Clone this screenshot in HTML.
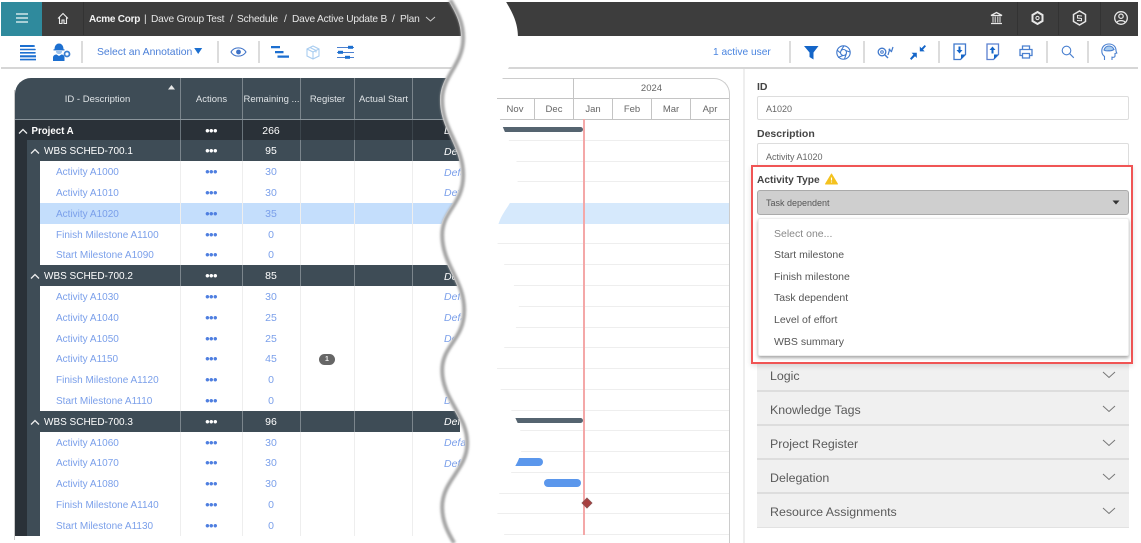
<!DOCTYPE html>
<html><head><meta charset="utf-8">
<style>
html,body{margin:0;padding:0;width:1141px;height:543px;overflow:hidden;background:#fff}
body{position:relative;font-family:"Liberation Sans",sans-serif;color:#555}
.a{position:absolute;white-space:nowrap}
.div{position:absolute;width:2px;top:41px;height:22px;background:#dcdcdc}
.hd{position:absolute;width:1px;top:2px;height:33px;background:#333}
.bc{position:absolute;top:13px;font-size:10.2px;line-height:13px;color:#e6e6e6;letter-spacing:-.2px;white-space:nowrap}
svg{position:absolute;overflow:visible}
#rows{position:absolute;left:15px;top:119.6px;width:445px}
.r{height:20.8px;position:relative;font-size:10px;line-height:20.8px;color:#7a9fea;
background:
linear-gradient(#eee,#eee) 165px 0/1px 100% no-repeat,
linear-gradient(#eee,#eee) 227px 0/1px 100% no-repeat,
linear-gradient(#eee,#eee) 285px 0/1px 100% no-repeat,
linear-gradient(#eee,#eee) 339px 0/1px 100% no-repeat,
linear-gradient(#eee,#eee) 397px 0/1px 100% no-repeat,
linear-gradient(#2a3138,#2a3138) 0 0/12px 100% no-repeat,
linear-gradient(#3e4c56,#3e4c56) 12px 0/13px 100% no-repeat}
.r span{position:absolute;top:2px;white-space:nowrap}
.r .n{left:41px}
.r .t{left:165px;width:62px;text-align:center;font-size:13px;letter-spacing:-.6px;color:#4f7fe0;top:1px}
.r .v{left:227px;width:58px;text-align:center;font-size:10.5px;top:1px}
.r .d{left:429px;font-style:italic;font-size:10.5px;top:1.5px}
.w{color:#fff;
background:
linear-gradient(#7b858c,#7b858c) 165px 0/1px 100% no-repeat,
linear-gradient(#7b858c,#7b858c) 227px 0/1px 100% no-repeat,
linear-gradient(#7b858c,#7b858c) 285px 0/1px 100% no-repeat,
linear-gradient(#7b858c,#7b858c) 339px 0/1px 100% no-repeat,
linear-gradient(#7b858c,#7b858c) 397px 0/1px 100% no-repeat,
linear-gradient(#2a3138,#2a3138) 0 0/12px 100% no-repeat,
linear-gradient(#3e4c56,#3e4c56) 12px 0/100% 100% no-repeat}
.w .n{left:29px;color:#fff}
.w .t{color:#fff}
.p{color:#fff;background:
linear-gradient(#6a747b,#6a747b) 165px 0/1px 100% no-repeat,
linear-gradient(#6a747b,#6a747b) 227px 0/1px 100% no-repeat,
linear-gradient(#3d464d,#3d464d) 285px 0/1px 100% no-repeat,
linear-gradient(#3d464d,#3d464d) 339px 0/1px 100% no-repeat,
linear-gradient(#3d464d,#3d464d) 397px 0/1px 100% no-repeat,
linear-gradient(#2a3138,#2a3138)}
.p .n{left:16.5px;font-weight:bold;font-size:9.7px}
.p .t{color:#fff}
.w .c,.p .c{position:absolute;top:7px;width:6px;height:6px}
.sel{background:
linear-gradient(#eee,#eee) 165px 0/1px 100% no-repeat,
linear-gradient(#eee,#eee) 227px 0/1px 100% no-repeat,
linear-gradient(#eee,#eee) 285px 0/1px 100% no-repeat,
linear-gradient(#eee,#eee) 339px 0/1px 100% no-repeat,
linear-gradient(#eee,#eee) 397px 0/1px 100% no-repeat,
linear-gradient(#2a3138,#2a3138) 0 0/12px 100% no-repeat,
linear-gradient(#3e4c56,#3e4c56) 12px 0/13px 100% no-repeat,
linear-gradient(#c4defc,#c4defc) 25px 0/100% 100% no-repeat}
.th{position:absolute;top:78px;height:41px;line-height:44px;text-align:center;color:#dfe3e6;font-size:9.5px;border-left:1px solid #7b858c;box-sizing:border-box;white-space:nowrap;overflow:hidden}
.gl{position:absolute;left:466px;width:263px;height:1px;background:#eee}
.mo{position:absolute;top:99px;height:20px;line-height:22px;text-align:center;font-size:9.5px;color:#666;border-left:1px solid #c4c4c4;box-sizing:border-box}
.lab{position:absolute;left:757px;font-size:10.5px;font-weight:bold;color:#444;white-space:nowrap}
.inp{position:absolute;left:757px;width:372px;box-sizing:border-box;border:1px solid #ddd;border-radius:2px;background:#fff;font-size:9px;color:#666;padding-left:8px;white-space:nowrap}
.it{position:absolute;left:774px;font-size:10.5px;line-height:14px;color:#555;white-space:nowrap}
.ac{position:absolute;left:757px;width:372px;height:34px;box-sizing:border-box;background:#f0f0f0;border-bottom:2px solid #ddd;font-size:12.4px;line-height:37px;padding-left:13px;color:#5a5a5a;white-space:nowrap}
</style></head>
<body>

<!-- header bar -->
<div class="a" style="left:1px;top:2px;width:1137px;height:33.5px;background:#3d3d3d"></div>
<div class="a" style="left:1px;top:2px;width:41px;height:33.5px;background:#2f8a9d"></div>
<svg style="left:0;top:0" width="80" height="36" fill="none">
<path d="M16 14h12M16 18h12M16 22h12" stroke="#cfe6ea" stroke-width="1.4"/>
<path d="M58 18.5l5-5 5 5M59.5 17.5v6h2.5v-3.5h2v3.500h2.500v-6" stroke="#eee" stroke-width="1.100"/>
</svg>
<div class="hd" style="left:83px"></div>
<div class="bc" style="left:89px;font-weight:bold;color:#f2f2f2;font-size:10px;letter-spacing:-.25px">Acme Corp</div>
<div class="bc" style="left:144px">|</div>
<div class="bc" style="left:151px">Dave Group Test</div>
<div class="bc" style="left:230px">/</div>
<div class="bc" style="left:237px">Schedule</div>
<div class="bc" style="left:284px">/</div>
<div class="bc" style="left:292px">Dave Active Update B</div>
<div class="bc" style="left:392px">/</div>
<div class="bc" style="left:400px">Plan</div>
<svg style="left:424px;top:15px" width="14" height="8" fill="none"><path d="M2 2l4.500 4L11 2" stroke="#ccc" stroke-width="1"/></svg>

<div class="hd" style="left:1017px"></div><div class="hd" style="left:1058px"></div><div class="hd" style="left:1100px"></div>
<svg style="left:990px;top:11px" width="14" height="14" fill="none" stroke="#e8e8e8">
<path d="M1 4.500L6.500 1.500 12 4.500zM1 12.500h11" stroke-width="1.300"/><path d="M3 5.500v6M5.200 5.500v6M7.800 5.500v6M10 5.500v6" stroke-width="1"/></svg>
<svg style="left:1031px;top:11px" width="14" height="14" fill="none" stroke="#e8e8e8">
<path d="M6.500 1l5 3v6l-5 3-5-3V4z" stroke-width="2"/><circle cx="6.500" cy="7" r="1.600" stroke-width="1"/></svg>
<svg style="left:1072px;top:10px" width="15" height="16" fill="none" stroke="#e8e8e8">
<path d="M7.500 1l6 3.500v7l-6 3.500-6-3.500v-7z" stroke-width="1.500"/><path d="M10 6L5.500 5.500v2.500l4 .5v2.200L5 10.500" stroke-width="1"/></svg>
<svg style="left:1113px;top:10px" width="16" height="16" fill="none" stroke="#e8e8e8">
<circle cx="8" cy="8" r="6.300" stroke-width="1.300"/><circle cx="8" cy="6.200" r="2.200" stroke-width="1.200"/><path d="M3.800 12.500c1-2.500 7.400-2.500 8.400 0" stroke-width="1.200"/></svg>

<!-- toolbar -->
<div class="a" style="left:1px;top:67px;width:1137px;height:2px;background:#d6d6d6"></div>
<div class="div" style="left:81px"></div><div class="div" style="left:217px"></div><div class="div" style="left:258px"></div>
<div class="div" style="left:789px"></div><div class="div" style="left:863px"></div><div class="div" style="left:938px"></div><div class="div" style="left:1046px"></div><div class="div" style="left:1087px"></div>

<svg style="left:19px;top:44px" width="18" height="17" fill="#1c6fd0">
<path d="M1 1h13c1.500 0 2 .5 2 1s-.5 1-2 1H1zM1 4.700h15c1 0 1 1.600 0 1.600H1zM1 8h15c1 0 1 1.600 0 1.600H1zM1 11.200h16v2.200H1zM1 14.800h16v1.600H1z"/></svg>
<svg style="left:52px;top:43px" width="19" height="18">
<path d="M2.500 6.500C2.500 2 5 .5 7 .5S11.500 2 11.500 6.500z" fill="#1c6fd0"/><path d="M1.500 6.300h11v1.100h-11z" fill="#1c6fd0"/>
<path d="M4 8h6c0 2-1.200 3-3 3S4 10 4 8z" fill="#9cc3ee"/>
<path d="M1 18v-3.500C1 12.500 3 11.500 4.500 11.500L7 13l2.500-1.500c1.500 0 3 1 3 3V18z" fill="#1c6fd0"/>
<circle cx="15" cy="11" r="2.500" fill="none" stroke="#3b80d2" stroke-width="1.800"/></svg>
<div class="a" style="left:97px;top:46px;font-size:10.4px;line-height:13px;color:#4a7fd8">Select an Annotation</div>
<svg style="left:194px;top:48px" width="9" height="7"><path d="M.2 0h8l-4 6z" fill="#1c6fd0"/></svg>
<svg style="left:230px;top:46px" width="17" height="12" fill="none" stroke="#3f73c8">
<path d="M1 6c3-5.500 11.500-5.500 15 0-3.500 5.500-12 5.500-15 0z" stroke-width="1.100"/><circle cx="8.500" cy="6" r="2.400" fill="#3f73c8" stroke="none"/></svg>
<svg style="left:271px;top:45px" width="18" height="14" fill="#1c6fd0"><path d="M0 1h9v2.300H0zM4 6h8.500v2.300H4zM6.500 10.500H18v2.300H6.500z"/></svg>
<svg style="left:306px;top:45px" width="14" height="15" fill="none" stroke="#a9cdf0" stroke-width="1.100"><path d="M7 1l6 3v7l-6 3-6-3V4zM1 4l6 3 6-3M7 7v7M4 2.500l6 3v2"/></svg>
<svg style="left:337px;top:45px" width="18" height="15" fill="#1c6fd0"><path d="M0 2h17v1H0zM0 7h17v1H0zM0 12h17v1H0z" fill="#4a80d0"/><rect x="11" y="0.800" width="5" height="3"/><rect x="1" y="5.800" width="5" height="3"/><rect x="8" y="10.800" width="5" height="3"/></svg>

<div class="a" style="left:713px;top:46px;font-size:10.2px;line-height:13px;color:#4a85e0">1 active user</div>
<svg style="left:804px;top:46px" width="15" height="14"><path d="M0 0h14.500L9.500 6.500V13.500L5.500 11V6.500z" fill="#1465c8"/></svg>
<svg style="left:836px;top:45px" width="15" height="15" fill="none" stroke="#3f78cc" stroke-width="1.100"><circle cx="7.500" cy="7.500" r="6.700"/><circle cx="7.500" cy="7.500" r="3"/><path d="M5 5.500L8 .8M9.500 5.500L14 7M10.300 8.700L8.500 14M7 10.500L2 12.500M4.500 8L1 5"/></svg>
<svg style="left:877px;top:45px" width="17" height="14" fill="none" stroke="#3f78cc"><circle cx="5" cy="7" r="3.800" stroke-width="1.300"/><circle cx="5" cy="7" r="1.300" stroke-width="1"/><path d="M8 10l3 3" stroke-width="1.400"/><path d="M11 10l1.500-5 2 1.500L16 2" stroke-width="1.200"/><circle cx="12.500" cy="4.500" r="1" fill="#3f78cc" stroke="none"/></svg>
<svg style="left:910px;top:44px" width="17" height="17" fill="#1465c8"><path d="M16 2.300L14.700 1 11.500 4.200 9.800 2.500V7.400h4.900L13 5.600zM1.300 16L5 12.300 6.800 14V8.800H1.600L3.400 10.600 0 14.500z"/></svg>
<svg style="left:953px;top:43px" width="14" height="18" fill="none"><path d="M1 1h11.500v10.500L7.500 16.500H1z" stroke="#3f78cc" stroke-width="1.300"/><path d="M8 11.500h4.500L8 16.500z" fill="#1465c8"/><path d="M5.500 3.500h2v3.500h2L6.500 10.500 3.500 7h2z" fill="#1465c8"/></svg>
<svg style="left:986px;top:43px" width="14" height="18" fill="none"><path d="M1 1h11.500v10.500L7.500 16.500H1z" stroke="#5a80d0" stroke-width="1.300"/><path d="M8 11.500h4.500L8 16.500z" fill="#1465c8"/><path d="M5.500 10.500h2V7h2L6.500 3.500 3.500 7h2z" fill="#1465c8"/></svg>
<svg style="left:1019px;top:45px" width="14" height="14" fill="none" stroke="#4a80d0" stroke-width="1.300"><path d="M3.500 4V1h7v3"/><path d="M3 10.500H1V4.500h12v6h-2"/><path d="M3.500 8.500h7v4.500h-7z"/></svg>
<svg style="left:1061px;top:45px" width="14" height="14" fill="none" stroke="#4a80d0" stroke-width="1.100"><circle cx="5.500" cy="5.500" r="4.300"/><path d="M8.700 8.700L12.800 12.800"/></svg>
<svg style="left:1101px;top:43px" width="16" height="18" fill="none" stroke="#4a80d0" stroke-width="1.100"><path d="M3.500 17v-3.500C1.500 12 .8 10 .8 8 .8 3.500 4 1 8 1s7 2.500 7 6.500c0 .8.500 2 .8 2.500L14 10.500v2.500c0 1-1 1.500-3 1.200V17"/><path d="M3 7c1-3 3-4 5-4s4 1 5 3.500c-1.500 1-3 1.500-5 1.200C6 8 4 8 3 7z" fill="#a9cdf0"/></svg>

<!-- table -->
<div class="a" style="left:14px;top:90px;width:1px;height:450px;background:#c9c9c9"></div>
<div class="a" style="left:15px;top:78px;width:445px;height:41.600px;background:#3e4c56;border-top-left-radius:16px"></div>
<div class="a" style="left:15px;top:119px;width:445px;height:1px;background:#8a949b"></div>
<div class="th" style="left:15px;width:165px;border-left:0">ID - Description</div>
<svg style="left:168px;top:85px" width="8" height="5"><path d="M0 4.500L3.500 0 7 4.500z" fill="#e8e8e8"/></svg>
<div class="th" style="left:180px;width:62px">Actions</div>
<div class="th" style="left:242px;width:58px">Remaining ...</div>
<div class="th" style="left:300px;width:54px">Register</div>
<div class="th" style="left:354px;width:58px">Actual Start</div>
<div class="th" style="left:412px;width:48px"></div>

<div id="rows">
<div class="r p"><svg class="c" style="left:3px;top:8px" width="10" height="7" fill="none"><path d="M1 5.500l4-4 4 4" stroke="#eee" stroke-width="1.300"/></svg><span class="n">Project A</span><span class="t">•••</span><span class="v">266</span><span class="d" style="color:#fff">Default</span></div>
<div class="r w"><svg class="c" style="left:15px;top:8px" width="10" height="7" fill="none"><path d="M1 5.500l4-4 4 4" stroke="#eee" stroke-width="1.300"/></svg><span class="n">WBS SCHED-700.1</span><span class="t">•••</span><span class="v">95</span><span class="d">Default</span></div>
<div class="r"><span class="n">Activity A1000</span><span class="t">•••</span><span class="v">30</span><span class="d">Default</span></div>
<div class="r"><span class="n">Activity A1010</span><span class="t">•••</span><span class="v">30</span><span class="d">Default</span></div>
<div class="r sel"><span class="n">Activity A1020</span><span class="t">•••</span><span class="v">35</span></div>
<div class="r"><span class="n">Finish Milestone A1100</span><span class="t">•••</span><span class="v">0</span></div>
<div class="r"><span class="n">Start Milestone A1090</span><span class="t">•••</span><span class="v">0</span></div>
<div class="r w"><svg class="c" style="left:15px;top:8px" width="10" height="7" fill="none"><path d="M1 5.500l4-4 4 4" stroke="#eee" stroke-width="1.300"/></svg><span class="n">WBS SCHED-700.2</span><span class="t">•••</span><span class="v">85</span><span class="d">Default</span></div>
<div class="r"><span class="n">Activity A1030</span><span class="t">•••</span><span class="v">30</span><span class="d">Default</span></div>
<div class="r"><span class="n">Activity A1040</span><span class="t">•••</span><span class="v">25</span><span class="d">Default</span></div>
<div class="r"><span class="n">Activity A1050</span><span class="t">•••</span><span class="v">25</span><span class="d">Default</span></div>
<div class="r"><span class="n">Activity A1150</span><span class="t">•••</span><span class="v">45</span><span style="left:304px;top:6px;width:16px;height:11px;border-radius:6px;background:#666;color:#eee;font-size:7px;line-height:11px;text-align:center;font-weight:bold">1</span></div>
<div class="r"><span class="n">Finish Milestone A1120</span><span class="t">•••</span><span class="v">0</span></div>
<div class="r"><span class="n">Start Milestone A1110</span><span class="t">•••</span><span class="v">0</span><span class="d">Default</span></div>
<div class="r w"><svg class="c" style="left:15px;top:8px" width="10" height="7" fill="none"><path d="M1 5.500l4-4 4 4" stroke="#eee" stroke-width="1.300"/></svg><span class="n">WBS SCHED-700.3</span><span class="t">•••</span><span class="v">96</span><span class="d">Default</span></div>
<div class="r"><span class="n">Activity A1060</span><span class="t">•••</span><span class="v">30</span><span class="d">Default</span></div>
<div class="r"><span class="n">Activity A1070</span><span class="t">•••</span><span class="v">30</span><span class="d">Default</span></div>
<div class="r"><span class="n">Activity A1080</span><span class="t">•••</span><span class="v">30</span></div>
<div class="r"><span class="n">Finish Milestone A1140</span><span class="t">•••</span><span class="v">0</span></div>
<div class="r"><span class="n">Start Milestone A1130</span><span class="t">•••</span><span class="v">0</span></div>
</div>

<!-- gantt -->
<div class="a" style="left:480px;top:78px;width:249px;height:41px;box-sizing:content-box;border-top:1px solid #ccc;border-right:1px solid #ccc;border-top-right-radius:16px"></div>
<div class="a" style="left:729px;top:100px;width:1px;height:443px;background:#ccc"></div>
<div class="a" style="left:480px;top:98px;width:249px;height:1px;background:#c4c4c4"></div>
<div class="a" style="left:480px;top:119px;width:249px;height:1px;background:#c4c4c4"></div>
<div class="a" style="left:573px;top:78px;width:1px;height:21px;background:#c4c4c4"></div>
<div class="a" style="left:574px;top:82px;width:155px;font-size:9.5px;line-height:13px;color:#666;text-align:center">2024</div>
<div class="mo" style="left:496px;width:38px;border-left:0">Nov</div>
<div class="mo" style="left:534px;width:39px">Dec</div>
<div class="mo" style="left:573px;width:39px">Jan</div>
<div class="mo" style="left:612px;width:39px">Feb</div>
<div class="mo" style="left:651px;width:39px">Mar</div>
<div class="mo" style="left:690px;width:39px">Apr</div>

<div class="a" style="left:466px;top:202.800px;width:263px;height:20.800px;background:#d6e9fc"></div>
<div class="gl" style="top:140px"></div><div class="gl" style="top:161px"></div><div class="gl" style="top:181px"></div><div class="gl" style="top:243px"></div><div class="gl" style="top:264px"></div><div class="gl" style="top:285px"></div><div class="gl" style="top:306px"></div><div class="gl" style="top:327px"></div><div class="gl" style="top:347px"></div><div class="gl" style="top:368px"></div><div class="gl" style="top:389px"></div><div class="gl" style="top:410px"></div><div class="gl" style="top:430px"></div><div class="gl" style="top:451px"></div><div class="gl" style="top:472px"></div><div class="gl" style="top:493px"></div><div class="gl" style="top:513px"></div><div class="gl" style="top:534px"></div>

<div class="a" style="left:490px;top:127px;width:93px;height:5px;background:#556470;border-radius:0 3px 3px 0"></div>
<div class="a" style="left:490px;top:418px;width:93px;height:5px;background:#556470;border-radius:0 3px 3px 0"></div>
<div class="a" style="left:490px;top:458px;width:53px;height:8px;background:#5b97ec;border-radius:0 4px 4px 0"></div>
<div class="a" style="left:544px;top:479px;width:37px;height:8px;background:#5b97ec;border-radius:4px"></div>
<div class="a" style="left:583px;top:119px;width:2px;height:416px;background:#f4a8a8"></div>
<svg style="left:581px;top:497px" width="12" height="12"><path d="M6 1l5 5-5 5-5-5z" fill="#a83f3f" stroke="#8a5555" stroke-width=".8"/></svg>

<!-- torn gap -->
<svg style="left:0;top:0" width="1141" height="543">
<defs><filter id="b" x="-20%" y="-5%" width="140%" height="110%"><feGaussianBlur stdDeviation="1.100"/></filter></defs>
<path d="M448 0C455 12 461 22 461 38C461 65 440 75 440 100C440 130 461 145 461 175C461 205 440 210 440 235C440 265 462 280 462 310C462 340 440 345 440 370C440 400 465 415 465 443C465 470 440 480 440 507C440 522 446 533 452 543L509 543C503 533 497 522 497 507C497 480 522 470 522 443C522 415 497 400 497 370C497 345 519 340 519 310C519 280 497 265 497 235C497 210 518 205 518 175C518 145 497 130 497 100C497 75 518 65 518 38C518 22 512 12 505 0Z" fill="#fff"/>
<path d="M448 0C455 12 461 22 461 38C461 65 440 75 440 100C440 130 461 145 461 175C461 205 440 210 440 235C440 265 462 280 462 310C462 340 440 345 440 370C440 400 465 415 465 443C465 470 440 480 440 507C440 522 446 533 452 543" fill="none" stroke="#a6a6a6" stroke-width="4" transform="translate(2.200 0)" filter="url(#b)"/>
</svg>

<!-- right panel -->
<div class="a" style="left:743px;top:69px;width:2px;height:474px;background:#eee"></div>
<div class="lab" style="top:81px">ID</div>
<div class="inp" style="top:96px;height:24px;line-height:24px">A1020</div>
<div class="lab" style="top:128px">Description</div>
<div class="inp" style="top:143px;height:24px;line-height:27px">Activity A1020</div>

<div class="ac" style="top:358px;line-height:36px;height:34px">Logic</div>
<div class="ac" style="top:392px">Knowledge Tags</div>
<div class="ac" style="top:426px">Project Register</div>
<div class="ac" style="top:460px">Delegation</div>
<div class="ac" style="top:494px;border-bottom:1px solid #e2e2e2">Resource Assignments</div>
<svg style="left:1101px;top:371px" width="16" height="150" fill="none" stroke="#777" stroke-width="1"><path d="M2 1l6 5.500L14 1M2 35l6 5.500L14 35M2 69l6 5.500L14 69M2 103l6 5.500L14 103M2 137l6 5.500L14 137"/></svg>

<div class="a" style="left:751px;top:165px;width:382px;height:199px;box-sizing:border-box;border:2px solid #f05555;background:#fff;box-shadow:0 2px 5px rgba(0,0,0,.12)"></div>
<div class="a" style="left:757px;top:174px;font-size:10.2px;line-height:14px;font-weight:bold;color:#444">Activity Type</div>
<svg style="left:825px;top:173px" width="13" height="12"><path d="M6.500 1L12.500 11H.5z" fill="#f4c21f" stroke="#f4c21f" stroke-linejoin="round"/><path d="M6.500 4.500v3M6.500 8.500v1" stroke="#fff" stroke-width="1.100"/></svg>
<div class="a" style="left:757px;top:190px;width:372px;height:25px;box-sizing:border-box;background:#cfcfcf;border:1px solid #aaa;border-radius:3px;font-size:9px;line-height:24px;padding-left:8px;color:#555">Task dependent</div>
<svg style="left:1112px;top:200px" width="9" height="6"><path d="M.5.500h7L4 4.500z" fill="#333"/></svg>
<div class="a" style="left:758px;top:218px;width:371px;height:138px;background:#fff;border:1px solid #eee;box-sizing:border-box;border-radius:2px;box-shadow:0 2px 3px rgba(0,0,0,.35)"></div>
<div class="it" style="top:226.500px;color:#888">Select one...</div>
<div class="it" style="top:247.500px">Start milestone</div>
<div class="it" style="top:269.500px">Finish milestone</div>
<div class="it" style="top:291px">Task dependent</div>
<div class="it" style="top:312.500px">Level of effort</div>
<div class="it" style="top:334.500px">WBS summary</div>

</body></html>
